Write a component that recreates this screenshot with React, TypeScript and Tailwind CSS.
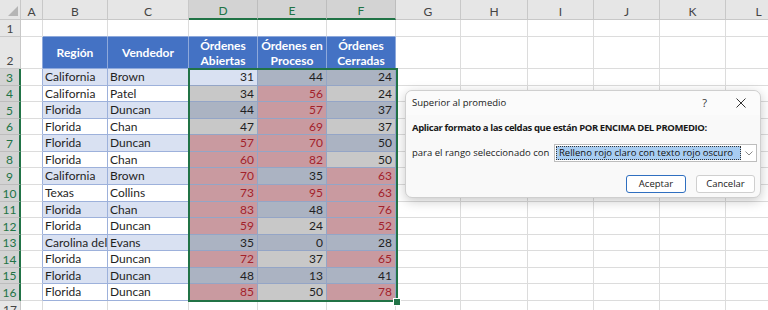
import React from 'react';

const WC = ['w-[22px]', 'w-[65px]', 'w-[81px]', 'w-[69px]', 'w-[69px]', 'w-[69px]', 'w-[65px]', 'w-[67px]', 'w-[66px]', 'w-[66px]', 'w-[66px]', 'w-[66px]'];
const LETTERS = ['A', 'B', 'C', 'D', 'E', 'F', 'G', 'H', 'I', 'J', 'K', 'L'];

const DATA: [string, string, number, number, number][] = [
  ['California', 'Brown', 31, 44, 24],
  ['California', 'Patel', 34, 56, 24],
  ['Florida', 'Duncan', 44, 57, 37],
  ['Florida', 'Chan', 47, 69, 37],
  ['Florida', 'Duncan', 57, 70, 50],
  ['Florida', 'Chan', 60, 82, 50],
  ['California', 'Brown', 70, 35, 63],
  ['Texas', 'Collins', 73, 95, 63],
  ['Florida', 'Chan', 83, 48, 76],
  ['Florida', 'Duncan', 59, 24, 52],
  ['Carolina del', 'Evans', 35, 0, 28],
  ['Florida', 'Duncan', 72, 37, 65],
  ['Florida', 'Duncan', 48, 13, 41],
  ['Florida', 'Duncan', 85, 50, 78],
];

const AVG = 2166 / 42;
const HS = [17, 16, 17, 16, 17, 16, 17, 17, 16, 17, 16, 17, 16, 17];

const base = 'shrink-0 box-border h-full border-r border-b flex items-center overflow-hidden whitespace-nowrap';

function RowHeader({ n, selected }: { n: number; selected?: boolean }) {
  return (
    <div
      className={
        'w-[21px] shrink-0 box-border h-full border-b flex justify-center items-end leading-[15px] ' +
        (selected
          ? 'bg-[#D3D3D3] text-[#217346] border-b-[#BDBDBD] border-r-2 border-r-[#217346]'
          : 'bg-[#E6E6E6] text-[#444444] border-b-[#C8C8C8] border-r border-r-[#C8C8C8]')
      }
    >
      {n}
    </div>
  );
}

function EmptyCell({ c, extra }: { c: number; extra?: string }) {
  return <div className={base + ' ' + WC[c] + ' bg-white border-[#DCDCDC] ' + (extra || '')} />;
}

function DataRow({ i }: { i: number }) {
  const r = i + 3;
  const band = i % 2 === 0;
  const [reg, ven, d, e, f] = DATA[i];
  const nums = [d, e, f];
  const h = HS[i] === 17 ? 'h-[17px]' : 'h-[16px]';
  return (
    <div className={'flex ' + h}>
      <RowHeader n={r} selected />
      <EmptyCell c={0} extra="border-r-[#9DB1DB]" />
      <div className={base + ' ' + WC[1] + ' pl-[2px] border-[#9DB1DB] ' + (band ? 'bg-[#D9E1F2]' : 'bg-white')}>{reg}</div>
      <div className={base + ' ' + WC[2] + ' pl-[2px] border-[#9DB1DB] ' + (band ? 'bg-[#D9E1F2]' : 'bg-white')}>{ven}</div>
      {nums.map((v, k) => {
        const red = v > AVG;
        const active = r === 3 && k === 0;
        const bg = active ? 'bg-[#D9E1F2]' : red ? 'bg-[#C99AA0]' : band ? 'bg-[#ABB3C2]' : 'bg-[#C8C8C8]';
        const tc = red ? 'text-[#A3222B]' : 'text-[#1F1F1F]';
        return (
          <div key={k} className={base + ' ' + WC[3 + k] + ' justify-end pr-[3px] border-[#94A5C6] ' + bg + ' ' + tc}>
            {v}
          </div>
        );
      })}
      {[6, 7, 8, 9, 10, 11].map((c) => (
        <EmptyCell key={c} c={c} />
      ))}
    </div>
  );
}

export default function App() {
  return (
    <div className="relative w-[768px] h-[310px] overflow-hidden bg-white font-['Lato',sans-serif] text-[12px] text-[#1F1F1F]">
      {/* column header row */}
      <div className="flex h-[20px] bg-[#E6E6E6]">
        <div className="w-[21px] shrink-0 box-border h-full border-r border-b border-[#C8C8C8] bg-[#E6E6E6] relative">
          <svg className="absolute right-[2px] bottom-[3px]" width="10" height="10" viewBox="0 0 10 10">
            <polygon points="10,0 10,10 0,10" fill="#B5B5B5" />
          </svg>
        </div>
        {LETTERS.map((l, c) => {
          const sel = c >= 3 && c <= 5;
          return (
            <div
              key={l}
              className={
                'shrink-0 box-border h-full border-r flex justify-center items-center pt-[4px] ' +
                WC[c] +
                ' ' +
                (sel
                  ? 'bg-[#D3D3D3] text-[#217346] border-r-[#BDBDBD] border-b-2 border-b-[#217346]'
                  : 'bg-[#E6E6E6] text-[#444444] border-r-[#C8C8C8] border-b border-b-[#C8C8C8]')
              }
            >
              {l}
            </div>
          );
        })}
      </div>

      {/* row 1 */}
      <div className="flex h-[17px]">
        <RowHeader n={1} />
        {LETTERS.map((_, c) => (
          <EmptyCell key={c} c={c} extra={c >= 1 && c <= 5 ? 'border-b-[#8EA9DB]' : ''} />
        ))}
      </div>

      {/* row 2: table headers */}
      <div className="flex h-[32px]">
        <RowHeader n={2} />
        <EmptyCell c={0} extra="border-r-[#8EA9DB]" />
        <div className={base + ' ' + WC[1] + ' justify-center bg-[#4472C4] text-white font-bold border-[#8EA9DB]'}>Región</div>
        <div className={base + ' ' + WC[2] + ' justify-center bg-[#4472C4] text-white font-bold border-[#8EA9DB]'}>Vendedor</div>
        {[
          ['Órdenes', 'Abiertas'],
          ['Órdenes en', 'Proceso'],
          ['Órdenes', 'Cerradas'],
        ].map(([a, b], k) => (
          <div
            key={k}
            className={base + ' ' + WC[3 + k] + ' flex-col justify-center text-center leading-[15px] bg-[#4472C4] text-white font-bold border-[#8EA9DB]'}
          >
            <span>{a}</span>
            <span>{b}</span>
          </div>
        ))}
        {[6, 7, 8, 9, 10, 11].map((c) => (
          <EmptyCell key={c} c={c} />
        ))}
      </div>

      {DATA.map((_, i) => (
        <DataRow key={i} i={i} />
      ))}

      {/* row 17 */}
      <div className="flex h-[17px]">
        <RowHeader n={17} />
        {LETTERS.map((_, c) => (
          <EmptyCell key={c} c={c} />
        ))}
      </div>

      {/* selection border */}
      <div className="absolute left-[188px] top-[68px] w-[210px] h-[234px] border-2 border-[#217346] pointer-events-none" />
      <div className="absolute left-[393px] top-[298px] w-[6px] h-[6px] bg-[#217346] border border-white box-content" />

      {/* dialog */}
      <div className="absolute left-[405px] top-[90px] w-[356px] h-[108px] rounded-[7px] border border-[#CFCFCF] bg-[#F9F9F9] shadow-[0_3px_12px_rgba(0,0,0,0.22)] font-['Open_Sans',sans-serif] text-[9.5px] text-[#1A1A1A] flex flex-col">
        <div className="flex items-center h-[24px] pl-[6px] pr-[14px] bg-[#FBFBFB] rounded-t-[7px]">
          <span>Superior al promedio</span>
          <span className="ml-auto mr-[29px] text-[11px] text-[#333]">?</span>
          <svg width="10" height="10" viewBox="0 0 10 10">
            <line x1="0.5" y1="0.5" x2="9.5" y2="9.5" stroke="#333" strokeWidth="1" />
            <line x1="9.5" y1="0.5" x2="0.5" y2="9.5" stroke="#333" strokeWidth="1" />
          </svg>
        </div>
        <div className="pl-[6px] mt-[6px] font-bold leading-[14px] tracking-[-0.4px]">Aplicar formato a las celdas que están POR ENCIMA DEL PROMEDIO:</div>
        <div className="flex items-center h-[18px] mt-[9px] pl-[6px]">
          <span className="w-[142px] shrink-0">para el rango seleccionado con</span>
          <div className="flex items-center w-[203px] h-[18px] border border-[#BDBDBD] bg-white box-border">
            <div className="flex-1 h-[14px] ml-[1px] bg-[#A8CDF2] border border-dotted border-[#333] flex items-center pl-[2px] text-[#111] leading-[12px]">
              Relleno rojo claro con texto rojo oscuro
            </div>
            <div className="w-[15px] h-full flex items-center justify-center">
              <svg width="8" height="5" viewBox="0 0 8 5">
                <polyline points="0.5,0.5 4,4 7.5,0.5" fill="none" stroke="#8A8A8A" strokeWidth="1" />
              </svg>
            </div>
          </div>
        </div>
        <div className="flex justify-end gap-[10px] mt-[13px] pr-[5px]">
          <div className="w-[60px] h-[18px] rounded-[3px] border border-[#2F6FC0] bg-white flex items-center justify-center box-border">Aceptar</div>
          <div className="w-[59px] h-[18px] rounded-[3px] border border-[#CFCFCF] bg-white flex items-center justify-center box-border">Cancelar</div>
        </div>
      </div>
    </div>
  );
}
